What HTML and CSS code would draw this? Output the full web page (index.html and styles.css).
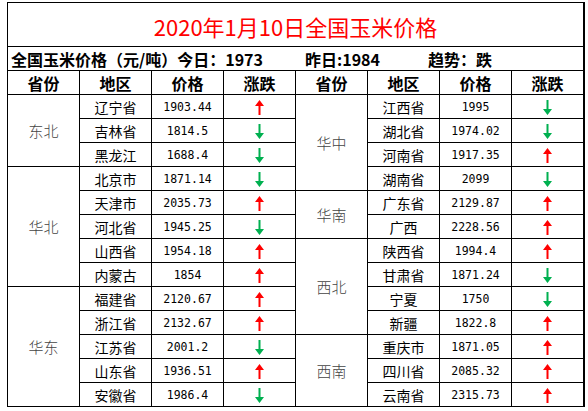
FILE: index.html
```html
<!DOCTYPE html>
<html lang="zh-CN">
<head>
    <meta charset="UTF-8">
    <title>2020年1月10日全国玉米价格</title>
    <link rel="stylesheet" href="styles.css">
</head>
<body>
    <!-- arrow symbols -->
    <svg class="defs" width="0" height="0">
        <symbol id="arrow-up" viewBox="0 0 9 15"><path d="M4.5 0 L9 6 H5.5 V15 H3.5 V6 H0 Z"/></symbol>
        <symbol id="arrow-down" viewBox="0 0 9 15"><path d="M4.5 15 L9 9 H5.5 V0 H3.5 V9 H0 Z"/></symbol>
    </svg>

    <div class="sheet">
        <div class="title">2020年1月10日全国玉米价格</div>
        <div class="info">
            <span class="today">全国玉米价格（元/吨）今日：1973</span>
            <span class="yesterday">昨日:1984</span>
            <span>趋势：跌</span>
        </div>

        <!-- left half -->
        <div class="half">
            <div class="head">省份</div><div class="head">地区</div><div class="head">价格</div><div class="head">涨跌</div>

            <div class="region span3">东北</div>
            <div class="name">辽宁省</div><div class="price">1903.44</div><div class="trend up"><svg><use href="#arrow-up"/></svg></div>
            <div class="name">吉林省</div><div class="price">1814.5</div><div class="trend down"><svg><use href="#arrow-down"/></svg></div>
            <div class="name">黑龙江</div><div class="price">1688.4</div><div class="trend down"><svg><use href="#arrow-down"/></svg></div>

            <div class="region span5">华北</div>
            <div class="name">北京市</div><div class="price">1871.14</div><div class="trend down"><svg><use href="#arrow-down"/></svg></div>
            <div class="name">天津市</div><div class="price">2035.73</div><div class="trend up"><svg><use href="#arrow-up"/></svg></div>
            <div class="name">河北省</div><div class="price">1945.25</div><div class="trend down"><svg><use href="#arrow-down"/></svg></div>
            <div class="name">山西省</div><div class="price">1954.18</div><div class="trend up"><svg><use href="#arrow-up"/></svg></div>
            <div class="name">内蒙古</div><div class="price">1854</div><div class="trend up"><svg><use href="#arrow-up"/></svg></div>

            <div class="region span5">华东</div>
            <div class="name">福建省</div><div class="price">2120.67</div><div class="trend up"><svg><use href="#arrow-up"/></svg></div>
            <div class="name">浙江省</div><div class="price">2132.67</div><div class="trend up"><svg><use href="#arrow-up"/></svg></div>
            <div class="name">江苏省</div><div class="price">2001.2</div><div class="trend down"><svg><use href="#arrow-down"/></svg></div>
            <div class="name">山东省</div><div class="price">1936.51</div><div class="trend up"><svg><use href="#arrow-up"/></svg></div>
            <div class="name">安徽省</div><div class="price">1986.4</div><div class="trend down"><svg><use href="#arrow-down"/></svg></div>
        </div>

        <!-- right half -->
        <div class="half">
            <div class="head">省份</div><div class="head">地区</div><div class="head">价格</div><div class="head">涨跌</div>

            <div class="region span4">华中</div>
            <div class="name">江西省</div><div class="price">1995</div><div class="trend down"><svg><use href="#arrow-down"/></svg></div>
            <div class="name">湖北省</div><div class="price">1974.02</div><div class="trend down"><svg><use href="#arrow-down"/></svg></div>
            <div class="name">河南省</div><div class="price">1917.35</div><div class="trend up"><svg><use href="#arrow-up"/></svg></div>
            <div class="name">湖南省</div><div class="price">2099</div><div class="trend down"><svg><use href="#arrow-down"/></svg></div>

            <div class="region span2">华南</div>
            <div class="name">广东省</div><div class="price">2129.87</div><div class="trend up"><svg><use href="#arrow-up"/></svg></div>
            <div class="name">广西</div><div class="price">2228.56</div><div class="trend up"><svg><use href="#arrow-up"/></svg></div>

            <div class="region span4">西北</div>
            <div class="name">陕西省</div><div class="price">1994.4</div><div class="trend up"><svg><use href="#arrow-up"/></svg></div>
            <div class="name">甘肃省</div><div class="price">1871.24</div><div class="trend down"><svg><use href="#arrow-down"/></svg></div>
            <div class="name">宁夏</div><div class="price">1750</div><div class="trend down"><svg><use href="#arrow-down"/></svg></div>
            <div class="name">新疆</div><div class="price">1822.8</div><div class="trend up"><svg><use href="#arrow-up"/></svg></div>

            <div class="region span3">西南</div>
            <div class="name">重庆市</div><div class="price">1871.05</div><div class="trend up"><svg><use href="#arrow-up"/></svg></div>
            <div class="name">四川省</div><div class="price">2085.32</div><div class="trend up"><svg><use href="#arrow-up"/></svg></div>
            <div class="name">云南省</div><div class="price">2315.73</div><div class="trend up"><svg><use href="#arrow-up"/></svg></div>
        </div>
    </div>
</body>
</html>
```

FILE: styles.css
```css
/* Global */
body {
    margin: 0;
    padding: 2px 0 0 7px;
    background: #fff;
    font-family: "Noto Sans CJK SC", sans-serif;
    color: #000;
}

.defs {
    position: absolute;
    width: 0;
    height: 0;
}

/* Sheet grid: black background shows through the 1px gaps as cell borders */
.sheet {
    display: grid;
    grid-template-columns: 287px 287px;
    grid-template-rows: 43px 23px auto;
    gap: 1px;
    padding: 1px 2px 1px 1px;
    background: #000;
    width: max-content;
}

.sheet > div {
    background: #fff;
}

.title {
    grid-column: span 2;
    display: flex;
    align-items: center;
    justify-content: center;
    padding-top: 3px;
    font-size: 22px;
    color: #f00;
}

.info {
    grid-column: span 2;
    display: flex;
    align-items: center;
    padding-left: 3px;
    font-size: 16px;
    font-weight: bold;
    white-space: nowrap;
}

.info .today {
    width: 294px;
}

.info .yesterday {
    width: 123px;
}

/* Half tables */
.sheet > .half {
    display: grid;
    grid-template-columns: repeat(4, 71px);
    grid-auto-rows: 23px;
    gap: 1px;
    background: #000;
}

.half > div {
    background: #fff;
    display: flex;
    align-items: center;
    justify-content: center;
}

.head {
    font-size: 16px;
    font-weight: bold;
}

.region {
    font-size: 15px;
    font-weight: 300;
    color: #444;
}

.span2 { grid-row: span 2; }
.span3 { grid-row: span 3; }
.span4 { grid-row: span 4; }
.span5 { grid-row: span 5; }

.name {
    font-size: 14px;
}

.price {
    font-family: "DejaVu Sans Mono", monospace;
    font-size: 11.5px;
}

.trend svg {
    width: 9px;
    height: 15px;
    margin-top: 2px;
    fill: currentColor;
}

.up {
    color: #f00;
}

.down {
    color: #00b050;
}
```
